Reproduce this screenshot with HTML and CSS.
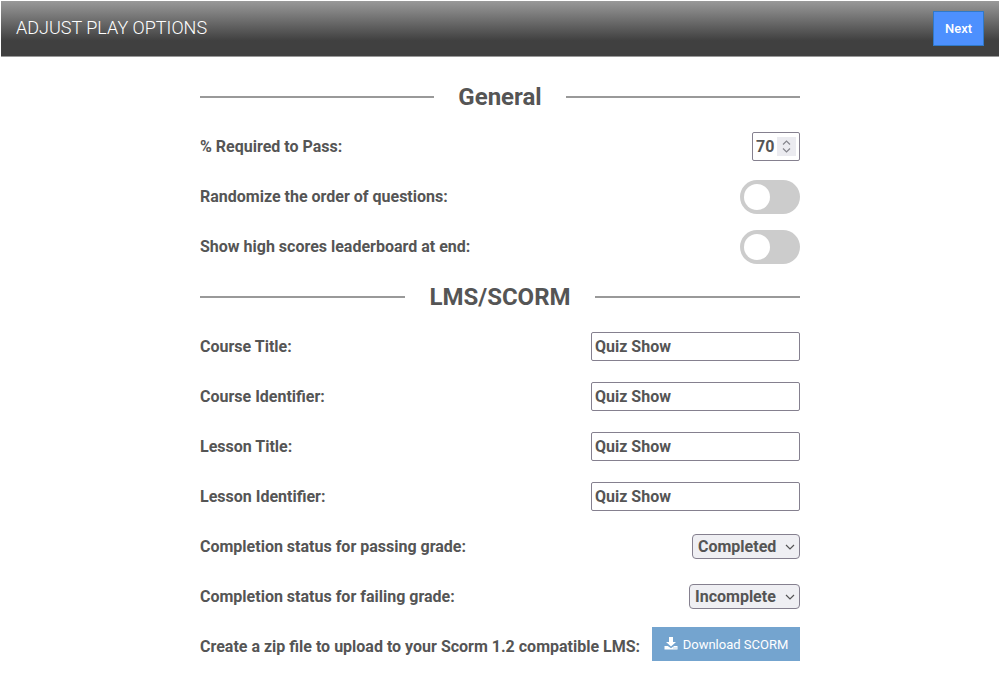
FILE: index.html

```html
<!DOCTYPE html>
<html lang="en">
<head>
    <meta charset="UTF-8">
    <meta name="viewport" content="width=device-width, initial-scale=1.0">
    <title>Adjust Play Options</title>
    <link rel="stylesheet" href="styles.css">
</head>
<body>
    <header class="top-bar">
        <span class="top-title">ADJUST PLAY OPTIONS</span>
        <button class="next-btn">Next</button>
    </header>

    <main class="options">
        <h2 class="section-title"><span>General</span></h2>
        <div class="option-row">
            <label>% Required to Pass:</label>
            <span class="number-field">
                <input class="pass-input" type="text" value="70">
                <span class="spinner">
                    <svg viewBox="0 0 19 19" width="19" height="19">
                        <path d="M6 7.500 9.500 4l3.500 3.500M6 11.500l3.500 3.500 3.500-3.500" fill="none" stroke="#85858c" stroke-width="1.200"/>
                    </svg>
                </span>
            </span>
        </div>
        <div class="option-row">
            <label>Randomize the order of questions:</label>
            <span class="toggle"><span class="knob"></span></span>
        </div>
        <div class="option-row">
            <label>Show high scores leaderboard at end:</label>
            <span class="toggle"><span class="knob"></span></span>
        </div>

        <h2 class="section-title"><span>LMS/SCORM</span></h2>
        <div class="option-row">
            <label>Course Title:</label>
            <input class="text-input" type="text" value="Quiz Show">
        </div>
        <div class="option-row">
            <label>Course Identifier:</label>
            <input class="text-input" type="text" value="Quiz Show">
        </div>
        <div class="option-row">
            <label>Lesson Title:</label>
            <input class="text-input" type="text" value="Quiz Show">
        </div>
        <div class="option-row">
            <label>Lesson Identifier:</label>
            <input class="text-input" type="text" value="Quiz Show">
        </div>
        <div class="option-row">
            <label>Completion status for passing grade:</label>
            <span class="select-field">
                <select class="status-select select-passing">
                    <option>Completed</option>
                    <option>Incomplete</option>
                </select>
                <svg class="select-arrow" viewBox="0 0 10 6" width="10" height="6">
                    <path d="M1 1l4 4 4-4" fill="none" stroke="#555" stroke-width="1.200"/>
                </svg>
            </span>
        </div>
        <div class="option-row">
            <label>Completion status for failing grade:</label>
            <span class="select-field">
                <select class="status-select select-failing">
                    <option>Incomplete</option>
                    <option>Completed</option>
                </select>
                <svg class="select-arrow" viewBox="0 0 10 6" width="10" height="6">
                    <path d="M1 1l4 4 4-4" fill="none" stroke="#555" stroke-width="1.200"/>
                </svg>
            </span>
        </div>
        <div class="option-row">
            <label>Create a zip file to upload to your Scorm 1.2 compatible LMS:</label>
            <button class="download-btn">
                <svg class="download-icon" viewBox="0 0 14 14" width="14" height="14">
                    <path fill="currentColor" d="M5 1h4v5h3L7 10.500 2 6h3z"/>
                    <path fill="currentColor" d="M0.500 10h3.300L7 12.300 10.200 10h3.300v3.500H0.500z"/>
                    <path fill="#74a4cf" d="M9.500 11.500h1v1h-1zM11.500 11.500h1v1h-1z"/>
                </svg>
                Download SCORM
            </button>
        </div>
    </main>
</body>
</html>
```

FILE: styles.css

```css
body {
    margin: 0;
    padding: 1px 1px 0;
    font-family: Roboto, sans-serif;
    background-color: #fff;
    color: #555;
}
.top-bar {
    display: flex;
    align-items: center;
    justify-content: space-between;
    height: 55px;
    padding: 0 15px;
    background: linear-gradient(#999999, #404040 72%);
    border-bottom: 1px solid #999;
}
.top-title {
    margin-bottom: 2px;
    color: #fff;
    font-size: 18px;
    font-weight: 300;
}
.next-btn {
    width: 51px;
    height: 35px;
    padding: 0;
    background-color: #4d90fe;
    border: 1px solid #3079c8;
    color: #fff;
    font-family: Roboto, sans-serif;
    font-size: 13px;
    font-weight: 500;
}
.options {
    width: 600px;
    margin: 0 auto;
    padding-top: 15px;
}
.section-title {
    display: flex;
    align-items: center;
    gap: 24px;
    height: 50px;
    margin: 0;
    font-size: 24px;
    font-weight: 700;
    color: #555;
}
.section-title::before,
.section-title::after {
    content: "";
    flex: 1;
    height: 2px;
    background-color: #999;
}
.option-row {
    display: flex;
    align-items: center;
    justify-content: space-between;
    height: 50px;
    font-size: 16px;
    font-weight: 700;
}
.option-row label {
    margin-bottom: 2px;
}
.number-field {
    position: relative;
    display: block;
    margin-bottom: 1px;
}
.pass-input {
    display: block;
    box-sizing: border-box;
    width: 48px;
    height: 29px;
    padding: 0 3px;
    border: 1px solid #85808f;
    border-radius: 2px;
    font-family: Roboto, sans-serif;
    font-size: 16px;
    font-weight: 700;
    color: #555;
}
.spinner {
    position: absolute;
    top: 5px;
    right: 4px;
    width: 19px;
    height: 19px;
    background-color: #ebebf0;
}
.spinner svg {
    display: block;
}
.text-input {
    box-sizing: border-box;
    width: 209px;
    height: 29px;
    margin-bottom: 1px;
    padding: 0 3px;
    border: 1px solid #85808f;
    border-radius: 2px;
    font-family: Roboto, sans-serif;
    font-size: 16px;
    font-weight: 700;
    color: #555;
}
.toggle {
    display: flex;
    align-items: center;
    width: 60px;
    height: 34px;
    border-radius: 17px;
    background-color: #ccc;
}
.knob {
    width: 26px;
    height: 26px;
    margin-left: 4px;
    border-radius: 50%;
    background-color: #fff;
}
.select-field {
    position: relative;
    display: block;
    margin-bottom: 1px;
}
.status-select {
    display: block;
    box-sizing: border-box;
    height: 25px;
    padding: 0 20px 0 5px;
    appearance: none;
    background-color: #efeff3;
    border: 1px solid #85808f;
    border-radius: 4px;
    font-family: Roboto, sans-serif;
    font-size: 16px;
    font-weight: 700;
    color: #555;
}
.select-passing {
    width: 108px;
}
.select-failing {
    width: 111px;
}
.select-arrow {
    position: absolute;
    top: 10px;
    right: 5px;
    pointer-events: none;
}
.download-btn {
    display: flex;
    align-items: center;
    justify-content: center;
    gap: 5px;
    width: 148px;
    height: 34px;
    margin-bottom: 6px;
    padding: 0;
    border: none;
    background-color: #74a4cf;
    color: #fff;
    font-family: Roboto, sans-serif;
    font-size: 13px;
}
.download-icon {
    margin-top: -3px;
}
```
